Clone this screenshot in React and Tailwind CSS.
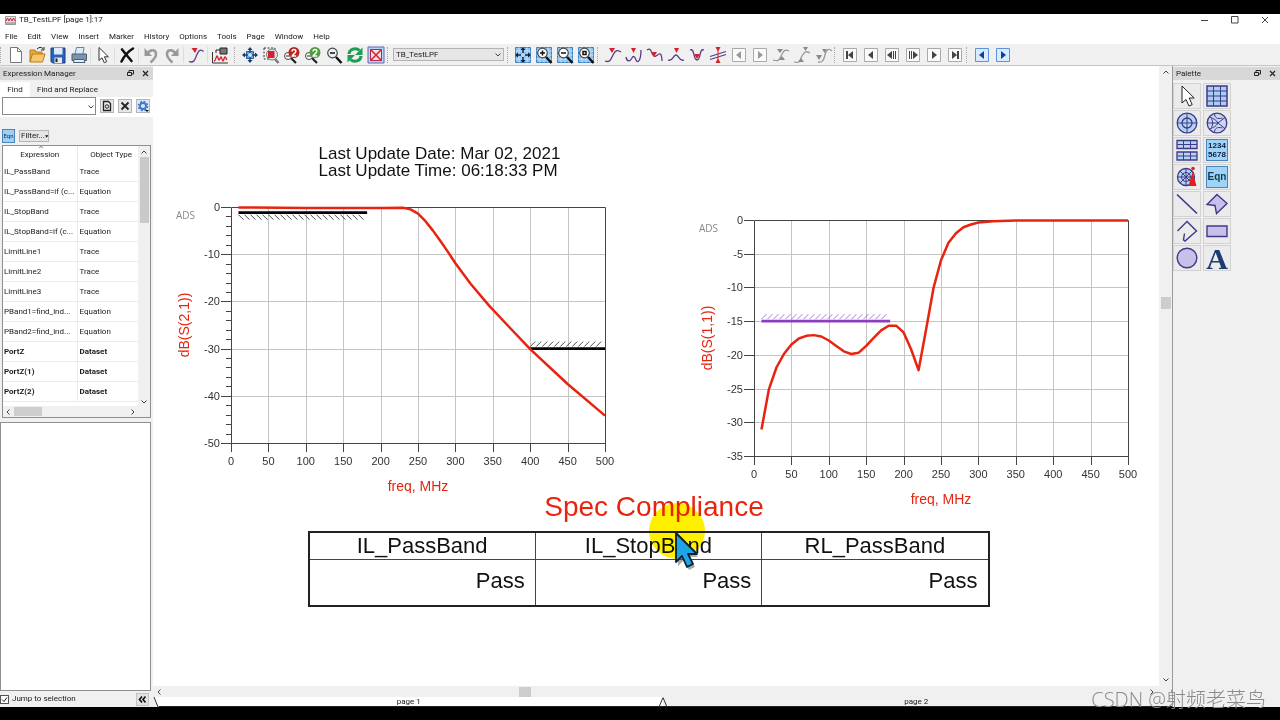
import React from "react";

const MENUS = ["File", "Edit", "View", "Insert", "Marker", "History", "Options", "Tools", "Page", "Window", "Help"];

const EXPRESSIONS = [
  { name: "IL_PassBand", type: "Trace" },
  { name: "IL_PassBand=if (c...", type: "Equation" },
  { name: "IL_StopBand", type: "Trace" },
  { name: "IL_StopBand=if (c...", type: "Equation" },
  { name: "LimitLine1", type: "Trace" },
  { name: "LimitLine2", type: "Trace" },
  { name: "LimitLine3", type: "Trace" },
  { name: "PBand1=find_ind...", type: "Equation" },
  { name: "PBand2=find_ind...", type: "Equation" },
  { name: "PortZ", type: "Dataset" },
  { name: "PortZ(1)", type: "Dataset" },
  { name: "PortZ(2)", type: "Dataset" },
];

/** [freq MHz, dB] */
const S21 = [
  [10, 0], [100, -0.1], [200, -0.1], [230, -0.05], [240, -0.4], [250, -1.3], [260, -2.9], [270, -4.9],
  [280, -7.1], [290, -9.4], [300, -11.8], [320, -16.1], [345, -20.8], [370, -25], [400, -30], [450, -37.4], [500, -44.1],
];
const S11 = [
  [10, -31], [20, -25], [30, -21.8], [40, -19.8], [50, -18.4], [60, -17.5], [70, -17.1], [80, -17],
  [90, -17.2], [100, -17.8], [110, -18.6], [120, -19.4], [130, -19.8], [140, -19.6], [150, -18.6],
  [160, -17.4], [170, -16.3], [180, -15.6], [190, -15.6], [200, -16.6], [210, -19.1], [220, -22.2],
  [230, -16.2], [240, -10], [250, -5.9], [260, -3.3], [270, -1.9], [280, -1], [290, -0.6], [300, -0.3],
  [320, -0.1], [350, 0], [500, 0],
];

/** toolbar icons, all on a 20x20 grid */
const Svg = ({ children, box = 20, className = "h-5 w-5" }) => (
  <svg viewBox={`0 0 ${box} ${box}`} className={className} fill="none" aria-hidden="true">
    {children}
  </svg>
);

const NewIcon = () => (
  <Svg>
    <path d="M4.500 2.500h7l4 4v11h-11z" fill="#fff" stroke="#777" />
    <path d="M11.500 2.500v4h4" stroke="#777" />
  </Svg>
);
const OpenIcon = () => (
  <Svg>
    <path d="M3 17V5h5l1.500 2H15v3" fill="#e9a83c" stroke="#b97a1c" />
    <path d="M3 17l2.500-8H18l-2.500 8z" fill="#f8c868" stroke="#b97a1c" />
    <path d="M10 4c2-2 4-2 6-.5M17 2v3h-3" stroke="#222" />
  </Svg>
);
const SaveIcon = () => (
  <Svg>
    <path d="M3 3h14v15H4.500L3 16.500z" fill="#2a62b8" stroke="#173f85" />
    <path d="M6 3h8.500v6.500H6z" fill="#dfeaf8" />
    <path d="M6.500 12.500h7.500V18H6.500z" fill="#e8e8e8" />
    <path d="M7.500 13.500h2V17h-2z" fill="#222" />
  </Svg>
);
const PrintIcon = () => (
  <Svg>
    <path d="M6 9l1.500-6.500H15L14 9" fill="#d8ecfb" stroke="#6b8299" />
    <path d="M3 9h14.500v6.500H3z" fill="#7b93ac" stroke="#4a5e75" />
    <path d="M5 14.500h10l1 3H4.500z" fill="#e4eef6" stroke="#4a5e75" />
  </Svg>
);
const ArrowIcon = () => (
  <Svg>
    <path d="M6 2.500v13l3-2.700 2.300 5 2.400-1.100-2.300-4.900h4z" fill="#fff" stroke="#333" />
  </Svg>
);
const DeleteIcon = () => (
  <Svg>
    <path d="M5 4.500L14.500 16M16 3.500C11 6.500 7.500 10.500 4.500 16.500" stroke="#111" strokeWidth="2.600" strokeLinecap="round" />
  </Svg>
);
const UndoIcon = ({ flip }) => (
  <Svg>
    <g transform={flip ? "translate(20 0) scale(-1 1)" : undefined}>
      <path d="M6.500 8.500C9 4 14.500 4 15 8.500c.3 3-2 6-5.500 9" stroke="#999" strokeWidth="2.500" />
      <path d="M3.500 3v8h7.500z" fill="#999" />
    </g>
  </Svg>
);
const InsertMarkerIcon = () => (
  <Svg>
    <path d="M3 16.500c5 2 6-2 7.500-6S14 3 17.500 6.500" stroke="#5a3a86" strokeWidth="1.300" />
    <path d="M5.500 3h6l-2.500 5z" fill="#d8202c" />
  </Svg>
);
const HistoryPlotIcon = () => (
  <Svg>
    <path d="M2.500 7v11h15.500" stroke="#333" />
    <path d="M10 3h7v6h-7z" fill="#777" stroke="#222" />
    <path d="M6 8V5h4" stroke="#222" />
    <path d="M4 16c2 0 2-5 3-5s1 4 2 4 1-3 2-3 1 4 2 4 1-4 2-4 1 2 2 3" stroke="#d8202c" strokeWidth="1.300" />
  </Svg>
);
const FourArrows = ({ boxed }) => (
  <Svg>
    {boxed && <GridTile />}
    {!boxed && <path d="M6.500 6.500h7v7h-7z" fill="#6aa5df" stroke="#2b5fa3" />}
    {!boxed && <path d="M10 6.500v7M6.500 10h7" stroke="#fff" />}
    <path
      d="M10 2l2.500 3h-5zM10 18l2.500-3h-5zM2 10l3-2.500v5zM18 10l-3-2.500v5z"
      fill={boxed ? "#0c2340" : "#123a73"}
    />
    <path d="M10 4v4M10 12v4M4 10h4M12 10h4" stroke={boxed ? "#0c2340" : "#123a73"} strokeWidth="1.500" />
  </Svg>
);
const GridTile = () => (
  <>
    <path d="M2.500 2.500h15v15h-15z" fill="#8cc1f0" stroke="#3f82c4" />
    <path d="M2.500 6h15M2.500 10h15M2.500 14h15M6 2.500v15M10 2.500v15M14 2.500v15" stroke="#c3e2fb" />
  </>
);
const Lens = ({ fill = "#fff", children }) => (
  <>
    <path d="M12 12l5.500 6" stroke="#111" strokeWidth="2.500" />
    <circle cx="8.500" cy="8" r="4.800" fill={fill} stroke="#444" strokeWidth="1.200" />
    {children}
  </>
);
const ZoomTile = ({ mark }) => (
  <Svg>
    <GridTile />
    <Lens>
      <path d={mark} stroke="#111" strokeWidth="1.500" />
    </Lens>
  </Svg>
);
const ZoomAreaIcon = () => (
  <Svg>
    <path d="M3 3h11v11H3z" stroke="#333" strokeDasharray="2 1.500" />
    <path d="M13 13l4.500 5" stroke="#777" strokeWidth="2.500" />
    <circle cx="11" cy="9.500" r="5.500" fill="#dbe8f0" stroke="#777" />
    <path d="M7 6h6.500v7H7z" fill="#d8202c" />
  </Svg>
);
const ZoomTwoIcon = ({ green }) => (
  <Svg>
    <path d="M9 13l5 5" stroke="#222" strokeWidth="2.200" />
    <circle cx="6" cy="11" r="3.500" fill="#fff" stroke="#444" />
    <path d="M4 11h4" stroke="#222" />
    <circle cx="12" cy="7.500" r="5.500" fill={green ? "#4d9b3f" : "#b5271f"} />
    <path d="M10 6.500c.3-3 4.200-2.500 3.800 0-.2 1.600-3 2.500-3.600 4.500h4" stroke="#fff" strokeWidth="1.500" />
  </Svg>
);
const ZoomOutIcon = () => (
  <Svg>
    <Lens fill="#e9eef2">
      <path d="M6 8h5" stroke="#111" strokeWidth="1.500" />
    </Lens>
  </Svg>
);
const RefreshIcon = () => (
  <Svg>
    <path d="M4 9c0-5 7-7 10.500-3.500M16 11c0 5-7 7-10.500 3.500" stroke="#1f9d55" strokeWidth="3" />
    <path d="M17.500 2.500V10H10zM2.500 17.500V10H10z" fill="#1f9d55" />
  </Svg>
);
const CrossBoxIcon = () => (
  <Svg>
    <path d="M2 2h16v16H2z" fill="#b9d3f5" stroke="#6468ae" />
    <path d="M4.500 4.500h11v11h-11z" fill="#f6dfe6" stroke="#b02a4a" />
    <path d="M4.500 4.500l11 11M15.500 4.500l-11 11" stroke="#d8202c" strokeWidth="1.500" />
  </Svg>
);
const CurveMarker = ({ curve, marker, gray }) => (
  <Svg>
    <path d={curve} stroke={gray ? "#999" : "#5a3a86"} strokeWidth="1.300" />
    <path d={marker} fill={gray ? "#888" : "#d8202c"} />
  </Svg>
);
const StepIcon = ({ shape, tone = "#444", frame = "#aaa", fill = "#fafafa" }) => (
  <Svg>
    <path d="M3.500 3.500h13v13h-13z" fill={fill} stroke={frame} />
    <path d={shape} fill={tone} />
  </Svg>
);

const LEFT = "M12 6v8l-5-4z";
const RIGHT = "M8 6v8l5-4z";

const TOOL_GROUPS = {
  file: [
    ["New", <NewIcon />], ["Open", <OpenIcon />], ["Save", <SaveIcon />], ["Print", <PrintIcon />], null,
    ["Select", <ArrowIcon />], null, ["Delete", <DeleteIcon />], null,
    ["Undo", <UndoIcon />], ["Redo", <UndoIcon flip />], null,
    ["Insert marker", <InsertMarkerIcon />], null, ["Plot history", <HistoryPlotIcon />],
  ],
  view: [
    ["Pan", <FourArrows />], ["Zoom area", <ZoomAreaIcon />], ["Zoom in by 2", <ZoomTwoIcon />],
    ["Zoom out by 2", <ZoomTwoIcon green />], ["Zoom out", <ZoomOutIcon />], ["Refresh", <RefreshIcon />],
    ["Stop updates", <CrossBoxIcon />],
  ],
  plot: [
    ["Fit plot", <FourArrows boxed />],
    ["Zoom in plot", <ZoomTile mark="M6 8h5M8.500 5.500v5" />],
    ["Zoom out plot", <ZoomTile mark="M6 8h5" />],
    ["Reset plot zoom", <ZoomTile mark="M7 6.500h3v3h-3z" />],
  ],
  marker: [
    ["Marker", <CurveMarker curve="M2 16c5 2 6-2 8-6s4-6 8-3" marker="M6 3h6l-3 5z" />],
    ["Max marker", <CurveMarker curve="M2 12c1 5 4 5 6 1 1.500-3 3-1 4 2 2 4 5 0 5-10" marker="M7 3h5l-2.500 5z" />],
    ["Min marker", <CurveMarker curve="M2 5c4-3 4 2 6 5s4 0 6-1 3 3 3 7" marker="M6 7h6l-3 5z" />],
    ["Peak marker", <CurveMarker curve="M2 15c5 2 5-5 8-5s3 7 8 5" marker="M8 3h5l-2.500 5z" />],
    ["Valley marker", <CurveMarker curve="M3 5c5-2 3 10 7 10s2-12 7-10" marker="M7 9h6l-3 5z" />],
    ["Line marker", <CurveMarker curve="M2 11.500l16-5M2 14.500l16-5" marker="M7.500 2h5l-2 4v8l2 4h-5l2-4V6z" />],
    ["Previous marker", <StepIcon shape={LEFT} tone="#999" />],
    ["Next marker", <StepIcon shape={RIGHT} tone="#999" />],
    ["Delta on", <CurveMarker gray curve="M2 15c7 2 6-1 8-4s3-8 8-5" marker="M6 4h6l-3 4zM8 15h6l-3-4z" />],
    ["Delta off", <CurveMarker gray curve="M2 17c7 2 6-3 8-6s3-6 8-3" marker="M11 2h5l-2.500 4zM6 17h6l-3-4z" />],
    ["Delta offset", <CurveMarker gray curve="M5 17c5 1 6-3 7-7s3-8 7-4" marker="M3 10h6l-3 5zM9 4h5l-2.500 4z" />],
  ],
  step: [
    ["First", <StepIcon shape="M6 6h2v8H6zM13 6v8l-5-4z" />],
    ["Back", <StepIcon shape={LEFT} />],
    ["Step back", <StepIcon shape="M10 6v8l-5-4zM11 6h1v8h-1zM13 6h1v8h-1z" />],
    ["Step forward", <StepIcon shape="M10 6v8l5-4zM8 6h1v8H8zM6 6h1v8H6z" />],
    ["Forward", <StepIcon shape={RIGHT} />],
    ["Last", <StepIcon shape="M12 6h2v8h-2zM7 6v8l5-4z" />],
  ],
  page: [
    ["Previous page", <StepIcon shape={LEFT} tone="#10409c" frame="#5b93dc" fill="#d9ecff" />],
    ["Next page", <StepIcon shape={RIGHT} tone="#10409c" frame="#5b93dc" fill="#d9ecff" />],
  ],
};

const Grip = () => <span className="mr-[3px] h-4 w-0.5 border-l border-dotted border-[#aaa]" />;

const ToolGroup = ({ items }) => (
  <div className="flex items-center gap-px">
    <Grip />
    {items.map((item, i) =>
      item ? (
        <button key={item[0]} type="button" aria-label={item[0]} className="h-5 w-5">
          {item[1]}
        </button>
      ) : (
        <span key={i} className="h-4 w-0.5 border-l border-[#dcdcdc]" />
      )
    )}
  </div>
);

const Chevron = ({ d, className = "h-2 w-2" }) => (
  <svg viewBox="0 0 8 8" className={className} fill="none" stroke="#444" aria-hidden="true">
    <path d={d} />
  </svg>
);
const UP = "M1.500 5.500L4 3l2.500 2.500";
const DOWN = "M1.500 2.500L4 5l2.500-2.500";
const PREV = "M5.500 1.500L3 4l2.500 2.500";
const NEXT = "M2.500 1.500L5 4 2.500 6.500";

const PanelHeader = ({ title }) => (
  <div className="flex h-[13px] items-center justify-between bg-[#d8d8d8] pr-1 pl-[3px]">
    <h2>{title}</h2>
    <div className="flex gap-2">
      <button type="button" aria-label={`Float ${title}`}>
        <svg viewBox="0 0 7 7" className="h-[7px] w-[7px]" fill="none" stroke="#222" aria-hidden="true">
          <path d="M.5 2.500h4v3h-4zM2 2.500V.5h4.500v3.500h-2" />
        </svg>
      </button>
      <button type="button" aria-label={`Close ${title}`}>
        <svg viewBox="0 0 7 7" className="h-[7px] w-[7px]" stroke="#222" strokeWidth="1.200" aria-hidden="true">
          <path d="M1 1l5 5M6 1L1 6" />
        </svg>
      </button>
    </div>
  </div>
);

const TitleBar = () => (
  <header className="flex h-3 items-center pl-[5px]">
    <svg viewBox="0 0 11 9" className="h-[9px] w-[11px]" fill="none" aria-hidden="true">
      <path d="M.5 .5h10v8H.5z" fill="#f1dfe4" stroke="#999" />
      <path d="M1 5l1.500-3L4 5l1.500-3L7 5l1.500-3L10 5" stroke="#b8283c" />
      <path d="M1 7h9" stroke="#777" />
    </svg>
    <h1 className="ml-[3px] flex-1">TB_TestLPF [page 1]:17</h1>
    <div className="flex gap-[22px] pr-[11px]">
      <button type="button" aria-label="Minimize">
        <Chevron d="M0 4.500h7" />
      </button>
      <button type="button" aria-label="Maximize">
        <Chevron d="M.5 .5h6.500v6.500H.5z" />
      </button>
      <button type="button" aria-label="Close">
        <Chevron d="M1 1l6 6M7 1l-6 6" />
      </button>
    </div>
  </header>
);

const Toolbar = () => (
  <div className="flex h-[22px] items-center gap-px overflow-hidden border-b border-[#c6c6c6] bg-[#f0f0f0]">
    <ToolGroup items={TOOL_GROUPS.file} />
    <span className="w-0.5" />
    <ToolGroup items={TOOL_GROUPS.view} />
    <div className="flex items-center gap-px">
      <Grip />
      <div className="relative">
        <select
          aria-label="Default dataset"
          className="h-[13px] w-[111px] appearance-none border border-[#b4b4b4] bg-[#e6e6e6] pl-0.5 leading-[11px]"
        >
          <option>TB_TestLPF</option>
        </select>
        <Chevron d={DOWN} className="pointer-events-none absolute top-[3px] right-0.5 h-2 w-2" />
      </div>
    </div>
    <span className="w-px" />
    <ToolGroup items={TOOL_GROUPS.plot} />
    <ToolGroup items={TOOL_GROUPS.marker} />
    <ToolGroup items={TOOL_GROUPS.step} />
    <ToolGroup items={TOOL_GROUPS.page} />
  </div>
);

const ExpressionTable = () => (
  <div className="mx-0.5 mt-0.5 border border-[#8f8f8f] bg-white">
    <div className="flex h-[260px] overflow-hidden">
      <table className="w-[135px] table-fixed border-collapse self-start">
        <thead>
          <tr className="h-[15px]">
            <th className="relative w-[74px] border-r border-[#e8e8e8] p-0 pt-0.5 text-center font-normal">
              Expression
              <Chevron d={UP} className="absolute -top-0.5 left-[34px] h-1.5 w-2" />
            </th>
            <th className="p-0 pt-0.5 pr-1.5 text-right font-normal">Object Type</th>
          </tr>
        </thead>
        <tbody>
          {EXPRESSIONS.map(({ name, type }) => (
            <tr key={name} className={type === "Dataset" ? "h-5 font-bold" : "h-5"}>
              <td className="border-r border-b border-[#ebebeb] p-0 pt-0.5 pl-px whitespace-nowrap">{name}</td>
              <td className="border-b border-[#ebebeb] p-0 pt-0.5 pl-0.5">{type}</td>
            </tr>
          ))}
        </tbody>
      </table>
      <div className="flex flex-1 flex-col items-center bg-[#f0f0f0] pt-0.5">
        <Chevron d={UP} />
        <span className="mt-px h-[66px] w-[9px] bg-[#c9c9c9]" />
        <span className="flex-1" />
        <Chevron d={DOWN} />
      </div>
    </div>
    <div className="flex h-[11px] items-center bg-[#f0f0f0] px-px">
      <Chevron d={PREV} />
      <span className="ml-0.5 h-[9px] w-7 bg-[#cdcdcd]" />
      <span className="flex-1" />
      <Chevron d={NEXT} />
      <span className="w-3" />
    </div>
  </div>
);

const ExpressionManager = () => (
  <aside className="flex w-[153px] shrink-0 flex-col bg-[#f0f0f0] pt-px">
    <PanelHeader title="Expression Manager" />
    <div className="mt-0.5 flex h-[15px]">
      <button type="button" className="w-[30px] bg-white">
        Find
      </button>
      <button type="button" className="pl-[7px]">
        Find and Replace
      </button>
    </div>
    <div className="flex items-center gap-1 bg-white pb-0.5 pl-0.5">
      <div className="relative">
        <input aria-label="Find text" className="h-[18px] w-[94px] border border-[#8a8a8a] bg-white px-1" />
        <Chevron d={DOWN} className="pointer-events-none absolute top-[6px] right-px h-2 w-2" />
      </div>
      <button type="button" aria-label="Find" className="h-[14px] w-[14px] border border-[#b5b5b5] bg-[#e6e6e6]">
        <Svg box={12} className="h-3 w-3">
          <path d="M2.500 1.500h5l2 2v7h-7z" stroke="#222" strokeWidth="1.300" />
          <circle cx="6" cy="6.500" r="1.700" stroke="#222" />
        </Svg>
      </button>
      <button type="button" aria-label="Clear" className="h-[14px] w-[14px] border border-[#b5b5b5] bg-[#e6e6e6]">
        <Svg box={12} className="h-3 w-3">
          <path d="M2.500 2.500l7 7M9.500 2.500l-7 7" stroke="#222" strokeWidth="1.800" />
        </Svg>
      </button>
      <button type="button" aria-label="Settings" className="h-[14px] w-[14px] border border-[#b5b5b5] bg-[#dfe9f6]">
        <Svg box={12} className="h-3 w-3">
          <circle cx="6" cy="6" r="4.500" stroke="#3b78cf" strokeWidth="1.500" strokeDasharray="2 1.530" />
          <circle cx="6" cy="6" r="3" stroke="#3b78cf" strokeWidth="1.800" />
          <path d="M8 10h4l-2 2z" fill="#111" />
        </Svg>
      </button>
    </div>
    <div className="mt-[12px] flex items-center gap-1 pl-0.5">
      <button
        type="button"
        className="h-[14px] w-[13px] border border-[#4a84bd] bg-[#9fd0f3] text-[6px] leading-3 text-[#0d2a4a]"
      >
        Eqn
      </button>
      <button type="button" className="flex h-3 w-[30px] items-center border border-[#b5b5b5] bg-[#e6e6e6] pl-px">
        Filter...
        <svg viewBox="0 0 4 3" className="h-[3px] w-1" aria-hidden="true">
          <path d="M0 0h4l-2 3z" fill="#111" />
        </svg>
      </button>
    </div>
    <ExpressionTable />
    <div className="mt-1 mr-0.5 flex-1 border border-[#8f8f8f] bg-white" />
    <div className="flex h-4 items-center justify-between pr-1">
      <label className="relative flex items-center gap-[3px]">
        <input type="checkbox" defaultChecked className="peer h-[9px] w-[9px] appearance-none border border-[#555] bg-white" />
        <svg
          viewBox="0 0 9 9"
          className="pointer-events-none absolute left-0 h-[9px] w-[9px] opacity-0 peer-checked:opacity-100"
          fill="none"
          stroke="#222"
          aria-hidden="true"
        >
          <path d="M2 4.500l2 2 3-4" />
        </svg>
        Jump to selection
      </label>
      <button type="button" aria-label="Collapse" className="h-[13px] w-[13px] border border-[#c4c4c4] bg-[#e3e3e3]">
        <Svg box={11} className="h-[11px] w-[11px]">
          <path d="M5 2.500L2.500 5.500 5 8.500M8.500 2.500L6 5.500l2.500 3" stroke="#111" strokeWidth="1.600" />
        </Svg>
      </button>
    </div>
  </aside>
);

/** rectangular plot: 374x236 data area placed at 60,10 */
const PLOT = { x: 60, y: 10, w: 374, h: 236 };

const LimitLine = ({ from, to, y, color, side }) => {
  // hatching leans away from the line on the forbidden side
  const marks = [];
  for (let x = from; x < to - 4; x += 6) marks.push(`M${x} ${y + 2 * side}l5 ${5 * side}`);
  return (
    <g stroke={color}>
      <path d={marks.join("")} strokeWidth="0.700" />
      <path d={`M${from} ${y}H${to}`} strokeWidth="2.600" />
    </g>
  );
};

const Chart = ({ label, trace, min, step, minor, limits }) => {
  const px = (mhz) => PLOT.x + (mhz / 500) * PLOT.w;
  const py = (db) => PLOT.y + (db / min) * PLOT.h;
  const crisp = (v) => Math.round(v) + 0.5;
  const xs = Array.from({ length: 11 }, (_, i) => i * 50);
  const ys = Array.from({ length: min / step + 1 }, (_, i) => i * step);
  const minors = minor ? Array.from({ length: min / minor }, (_, i) => i * minor) : [];
  const bottom = PLOT.y + PLOT.h;
  return (
    <svg viewBox="0 0 444 296" className="h-[296px] w-[444px]" fill="none" role="img" aria-label={label}>
      <g stroke="#c4c4c4">
        {xs.slice(1, 10).map((v) => (
          <path key={v} d={`M${crisp(px(v))} ${PLOT.y}V${bottom}`} />
        ))}
        {ys.slice(1, -1).map((v) => (
          <path key={v} d={`M${PLOT.x} ${crisp(py(v))}h${PLOT.w}`} />
        ))}
      </g>
      <path d={`M${PLOT.x + 0.5} ${PLOT.y + 0.5}h${PLOT.w}v${PLOT.h}h-${PLOT.w}z`} stroke="#444" />
      <g stroke="#444">
        {xs.map((v) => (
          <path key={v} d={`M${crisp(px(v))} ${bottom}v9`} />
        ))}
        {ys.map((v) => (
          <path key={v} d={`M${PLOT.x} ${crisp(py(v))}h-10`} />
        ))}
        {minors.map((v) => (
          <path key={v} d={`M${PLOT.x} ${crisp(py(v))}h-5`} />
        ))}
      </g>
      <g fill="#333" fontSize="11">
        {xs.map((v) => (
          <text key={v} x={px(v)} y={bottom + 22} textAnchor="middle">
            {v}
          </text>
        ))}
        {ys.map((v) => (
          <text key={v} x={PLOT.x - 11} y={py(v) + 4} textAnchor="end">
            {v}
          </text>
        ))}
      </g>
      {limits.map((l) => (
        <LimitLine key={l.from} from={px(l.from)} to={px(l.to)} y={py(l.db)} color={l.color} side={l.side} />
      ))}
      <polyline
        points={trace.map(([f, db]) => `${px(f)},${py(db) + 0.5}`).join(" ")}
        stroke="#e8230f"
        strokeWidth="2.500"
        strokeLinejoin="round"
      />
      <text x="5" y="22" fontSize="10" fill="#888" fontFamily="'Open Sans', sans-serif">
        ADS
      </text>
      <g fill="#e8230f" fontSize="14" textAnchor="middle">
        <text transform={`translate(18 ${PLOT.y + PLOT.h / 2}) rotate(-90)`}>{label}</text>
        <text x={PLOT.x + PLOT.w / 2} y={bottom + 48}>
          freq, MHz
        </text>
      </g>
    </svg>
  );
};

const COMPLIANCE = [
  ["IL_PassBand", "Pass"],
  ["IL_StopBand", "Pass"],
  ["RL_PassBand", "Pass"],
];

const ComplianceTable = () => (
  <div className="relative mt-[8px] ml-[137px] w-[682px]">
    <table className="w-full table-fixed border-collapse border-2 border-[#222] text-[22px] text-[#111]">
      <thead>
        <tr className="h-[27px]">
          {COMPLIANCE.map(([name]) => (
            <th key={name} className="border border-[#444] p-0 text-center leading-[26px] font-normal">
              {name}
            </th>
          ))}
        </tr>
      </thead>
      <tbody>
        <tr className="h-[46px]">
          {COMPLIANCE.map(([name, result]) => (
            <td key={name} className="border border-[#444] p-0 pr-[10px] pb-0.5 text-right leading-[26px]">
              {result}
            </td>
          ))}
        </tr>
      </tbody>
    </table>
    {/* highlighted mouse pointer */}
    <span className="absolute -top-7 left-[341px] h-14 w-14 rounded-full bg-[#fff000] mix-blend-multiply" />
    <svg viewBox="0 0 26 40" className="absolute top-0 left-[366px] h-10 w-[26px]" aria-hidden="true">
      <path d="M4 5v30l6-6 5 10 6-3-5-10h8z" fill="#555" opacity="0.500" />
      <path d="M2 2v29l6-6 5 11 6-3-5-10h9z" fill="#1ea5e8" stroke="#0b1f2e" strokeWidth="1.800" strokeLinejoin="round" />
    </svg>
  </div>
);

const DataDisplay = () => (
  <div className="flex flex-1 justify-center overflow-hidden bg-white pr-1">
    <div className="shrink-0 pt-[79px] font-['Liberation_Sans',Arial,sans-serif]">
      <p className="ml-[148px] text-[17px] leading-[17px] text-[#111]">
        Last Update Date: Mar 02, 2021
        <br />
        Last Update Time: 06:18:33 PM
      </p>
      <div className="mt-[18px] flex gap-[79px]">
        <Chart
          label="dB(S(2,1))"
          trace={S21}
          min={-50}
          step={-10}
          minor={-2}
          limits={[
            { from: 10, to: 182, db: -1.2, color: "#000", side: 1 },
            { from: 400, to: 500, db: -30, color: "#000", side: -1 },
          ]}
        />
        <div className="pt-[13px]">
          <Chart
            label="dB(S(1,1))"
            trace={S11}
            min={-35}
            step={-5}
            limits={[{ from: 10, to: 182, db: -15, color: "#8a3fc0", side: -1 }]}
          />
        </div>
      </div>
      <h2 className="-mt-[15px] text-center text-[28px] leading-8 text-[#e8230f]">Spec Compliance</h2>
      <ComplianceTable />
    </div>
  </div>
);

const PageTabs = () => (
  <div className="flex h-[10px] border-b border-[#222]">
    <div className="flex flex-1 items-start justify-between bg-white">
      <svg viewBox="0 0 6 10" className="h-[10px] w-1.5" fill="none" aria-hidden="true">
        <path d="M0 0v10h6z" fill="#f0f0f0" />
        <path d="M1 0l4 10" stroke="#333" />
      </svg>
      <button type="button" className="leading-[10px]">
        page 1
      </button>
      <svg viewBox="0 0 4 10" className="h-[10px] w-1" fill="none" aria-hidden="true">
        <path d="M0 10L4 .5" stroke="#333" />
      </svg>
    </div>
    <div className="flex flex-1 items-start justify-between bg-[#f0f0f0]">
      <svg viewBox="0 0 4 10" className="h-[10px] w-1" fill="none" aria-hidden="true">
        <path d="M0 .5L4 10" stroke="#333" />
      </svg>
      <button type="button" className="leading-[10px]">
        page 2
      </button>
      <span className="w-1.5" />
    </div>
  </div>
);

const Workspace = () => (
  <main className="flex min-w-0 flex-1 flex-col">
    <div className="flex flex-1">
      <DataDisplay />
      <div className="flex w-[13px] flex-col items-center justify-between bg-[#f0f0f0] py-0.5">
        <Chevron d={UP} />
        <span className="-mt-[146px] h-3 w-[10px] bg-[#cdcdcd]" />
        <Chevron d={DOWN} />
      </div>
    </div>
    <div className="flex h-[11px] items-center bg-[#f0f0f0] pl-0.5">
      <Chevron d={PREV} />
      <span className="ml-[35%] h-[10px] w-3 bg-[#cdcdcd]" />
      <span className="flex-1" />
      <Chevron d={NEXT} />
      <span className="w-4" />
    </div>
    <PageTabs />
  </main>
);

/** palette icons, 24x24 grid */
const P = { className: "mx-auto h-6 w-6", box: 24 };
const INK = "#3f3a86";
const PALETTE = [
  ["Select", <Svg {...P}>
    <path d="M7 2v17l4-3.500 3 6.500 3.200-1.400-3-6.600h5z" fill="#fff" stroke="#222" />
  </Svg>],
  ["Rectangular plot", <Svg {...P}>
    <path d="M2 2h20v20H2z" fill="#a9cdf3" stroke={INK} strokeWidth="1.500" />
    <path d="M2 7h20M2 12h20M2 17h20M8.500 2v20M15.500 2v20" stroke={INK} />
  </Svg>],
  ["Polar plot", <Svg {...P}>
    <circle cx="12" cy="12" r="9.800" fill="#b5d3f5" stroke={INK} strokeWidth="1.300" />
    <circle cx="12" cy="12" r="5" stroke={INK} strokeWidth="1.300" />
    <path d="M12 2.500v19M2.500 12h19" stroke={INK} />
  </Svg>],
  ["Smith chart", <Svg {...P}>
    <circle cx="12" cy="12" r="9.800" fill="#ccd6f2" stroke={INK} strokeWidth="1.300" />
    <path
      d="M2.500 12H13l7-5.500M13 12l7 5.500M4.500 6c4 1.500 7 3 8.500 6-1.500 3-4.500 4.500-8.500 6M9.500 2.500c0 4 2.500 6 8 4.500M9.500 21.500c0-4 2.500-6 8-4.500M6.500 7.500c1.500 3 1.500 6 0 9"
      stroke={INK}
    />
  </Svg>],
  ["Stacked plot", <Svg {...P}>
    <path d="M2 2.500h20v8H2zM2 14h20v8H2z" fill="#b5d3f5" stroke={INK} strokeWidth="1.300" />
    <path d="M2 6.500h20M2 18h20M8.500 2.500v8M15.500 2.500v8M8.500 14v8M15.500 14v8" stroke={INK} />
  </Svg>],
  ["List", <span className="mx-auto block h-[22px] w-[22px] border border-[#4a84bd] bg-[#9fd3f7] pt-px text-[8px] leading-[9px] font-bold text-[#0d1f3a]">
    1234
    <br />
    5678
  </span>],
  ["Antenna plot", <Svg {...P}>
    <circle cx="11" cy="12" r="8.500" fill="#b5d3f5" stroke={INK} strokeWidth="1.300" />
    <circle cx="11" cy="12" r="4.500" stroke={INK} />
    <path d="M11 3.500v17M2.500 12h17M5 6l12 12M17 6L5 18" stroke={INK} />
    <path d="M17.500 7l4 14h-8z" fill="#e02020" />
    <circle cx="18" cy="3.500" r="1.800" fill="#e02020" />
  </Svg>],
  ["Equation", <span className="mx-auto block h-[22px] w-[22px] border border-[#4a84bd] bg-[#9fd3f7] text-[10px] leading-5 font-bold text-[#123a4a]">
    Eqn
  </span>],
  ["Line", <Svg {...P}><path d="M2 2.500l20 19" stroke={INK} strokeWidth="1.700" /></Svg>],
  ["Polygon", <Svg {...P}>
    <path d="M12 2.500l10 9-10.500 10-1.500-8-8-1z" fill="#c8c0ea" stroke={INK} strokeWidth="1.400" />
  </Svg>],
  ["Polyline", <Svg {...P}>
    <path d="M2.500 12L12 2.500l9.500 9.500-11.500 10-1.500-1 1-6.500" stroke={INK} strokeWidth="1.400" />
  </Svg>],
  ["Rectangle", <Svg {...P}><path d="M2 7h20v10.500H2z" fill="#c8c0ea" stroke={INK} strokeWidth="1.400" /></Svg>],
  ["Circle", <Svg {...P}><circle cx="12" cy="12" r="9.800" fill="#c8c0ea" stroke={INK} strokeWidth="1.400" /></Svg>],
  ["Text", <span className="block font-['Liberation_Serif',serif] text-[30px] leading-[25px] font-bold text-[#1d3a72]">A</span>],
];

const Palette = () => (
  <aside className="w-[108px] shrink-0 border-l border-[#9a9a9a] bg-[#f0f0f0] pt-px">
    <PanelHeader title="Palette" />
    <div className="mt-[3px] grid w-[58px] grid-cols-2 gap-x-0.5 gap-y-px">
      {PALETTE.map(([name, icon]) => (
        <button
          key={name}
          type="button"
          aria-label={name}
          className="flex h-[26px] items-center justify-center border border-[#d2d2d2] bg-[#ebebeb] font-['Liberation_Sans',Arial,sans-serif]"
        >
          {icon}
        </button>
      ))}
    </div>
  </aside>
);

const App = () => (
  <div className="relative flex min-h-screen flex-col bg-black pt-[14px] pb-[13px] font-['Roboto','Noto_Sans',sans-serif] text-[8px] leading-3 text-[#1a1a1a]">
    <div className="flex flex-1 flex-col bg-white">
      <TitleBar />
      <nav className="flex h-[18px] items-center gap-[10px] pt-[3px] pl-[5px]">
        {MENUS.map((menu) => (
          <button key={menu} type="button">
            {menu}
          </button>
        ))}
      </nav>
      <Toolbar />
      <div className="flex flex-1">
        <ExpressionManager />
        <Workspace />
        <Palette />
      </div>
    </div>
    <p className="absolute right-[14px] bottom-[6px] font-['Open_Sans','Noto_Sans_CJK_SC',sans-serif] text-[20px] leading-7 font-light text-[#8a8a8a]">
      CSDN @射频老菜鸟
    </p>
  </div>
);

export default App;
